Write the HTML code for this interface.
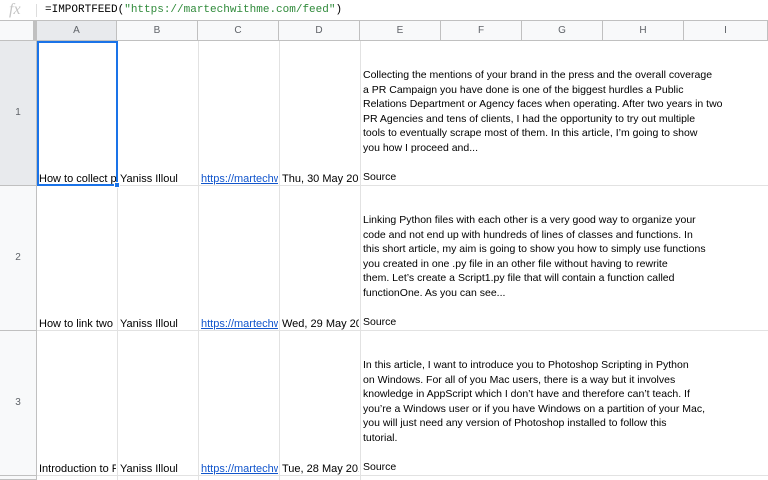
<!DOCTYPE html>
<html><head><style>
*{margin:0;padding:0;box-sizing:border-box}
body{width:768px;height:480px;overflow:hidden;background:#fff;font-family:"Liberation Sans",Arial,sans-serif;font-size:11px;color:#000;position:relative}
.a{position:absolute}
.fb{left:0;top:0;width:768px;height:21px;border-bottom:1px solid #c0c0c0;background:#fff}
.fx{left:9px;top:1px;font-family:"Liberation Serif",serif;font-style:italic;color:#c4c4c4;font-size:16px}
.sep{left:36px;top:4px;width:1px;height:13px;background:#ddd}
.fm{left:45px;top:4px;font-family:"Liberation Mono",monospace;font-size:11px;color:#000}
.fm span{color:#2f8a3a}
.hdr{top:21px;height:20px;background:#f8f9fa;border-right:1px solid #c0c0c0;border-bottom:1px solid #c0c0c0;color:#5f6368;font-size:10px;text-align:center;line-height:19px}
.rh{left:0;width:37px;background:#f8f9fa;border-right:1px solid #c0c0c0;border-bottom:1px solid #c0c0c0;color:#5f6368;font-size:10px;text-align:center}
.vl{top:41px;width:1px;height:439px;background:#e2e2e2}
.hl{left:37px;width:731px;height:1px;background:#e2e2e2}
.c{white-space:nowrap;overflow:hidden;height:14px;line-height:14px}
.lk{color:#1155cc;text-decoration:underline}
.e{left:363px;line-height:14.5px;white-space:pre;font-size:10.5px}
</style></head><body>
<div class="a fb"></div>
<div class="a fx">fx</div>
<div class="a sep"></div>
<div class="a fm">=IMPORTFEED(<span>"https://martechwithme.com/feed"</span>)</div>

<div class="a hdr" style="left:0;width:37px;border-right:4px solid #c0c0c0"></div>
<div class="a hdr" style="left:37px;width:80px;background:#e8eaed">A</div>
<div class="a hdr" style="left:117px;width:81px">B</div>
<div class="a hdr" style="left:198px;width:81px">C</div>
<div class="a hdr" style="left:279px;width:81px">D</div>
<div class="a hdr" style="left:360px;width:81px">E</div>
<div class="a hdr" style="left:441px;width:81px">F</div>
<div class="a hdr" style="left:522px;width:81px">G</div>
<div class="a hdr" style="left:603px;width:81px">H</div>
<div class="a hdr" style="left:684px;width:84px">I</div>

<div class="a rh" style="top:41px;height:145px;line-height:143px;background:#e8eaed">1</div>
<div class="a rh" style="top:186px;height:145px;line-height:143px">2</div>
<div class="a rh" style="top:331px;height:145px;line-height:143px">3</div>
<div class="a rh" style="top:476px;height:4px"></div>

<div class="a vl" style="left:117px"></div>
<div class="a vl" style="left:198px"></div>
<div class="a vl" style="left:279px"></div>
<div class="a vl" style="left:360px"></div>
<div class="a hl" style="top:185px"></div>
<div class="a hl" style="top:330px"></div>
<div class="a hl" style="top:475px"></div>

<div class="a c" style="left:39px;top:172px;width:77px">How to collect press</div>
<div class="a c" style="left:120px;top:172px;width:77px">Yaniss Illoul</div>
<div class="a c lk" style="left:201px;top:172px;width:77px">https://martechwithme</div>
<div class="a c" style="left:282px;top:172px;width:77px">Thu, 30 May 2019</div>
<div class="a e" style="top:68px">Collecting the mentions of your brand in the press and the overall coverage
a PR Campaign you have done is one of the biggest hurdles a Public
Relations Department or Agency faces when operating. After two years in two
PR Agencies and tens of clients, I had the opportunity to try out multiple
tools to eventually scrape most of them. In this article, I’m going to show
you how I proceed and...

Source</div>

<div class="a c" style="left:39px;top:317px;width:77px">How to link two Python</div>
<div class="a c" style="left:120px;top:317px;width:77px">Yaniss Illoul</div>
<div class="a c lk" style="left:201px;top:317px;width:77px">https://martechwithme</div>
<div class="a c" style="left:282px;top:317px;width:77px">Wed, 29 May 2019</div>
<div class="a e" style="top:213px">Linking Python files with each other is a very good way to organize your
code and not end up with hundreds of lines of classes and functions. In
this short article, my aim is going to show you how to simply use functions
you created in one .py file in an other file without having to rewrite
them. Let’s create a Script1.py file that will contain a function called
functionOne. As you can see...

Source</div>

<div class="a c" style="left:39px;top:462px;width:77px">Introduction to Photoshop</div>
<div class="a c" style="left:120px;top:462px;width:77px">Yaniss Illoul</div>
<div class="a c lk" style="left:201px;top:462px;width:77px">https://martechwithme</div>
<div class="a c" style="left:282px;top:462px;width:77px">Tue, 28 May 2019</div>
<div class="a e" style="top:358px">In this article, I want to introduce you to Photoshop Scripting in Python
on Windows. For all of you Mac users, there is a way but it involves
knowledge in AppScript which I don’t have and therefore can’t teach. If
you’re a Windows user or if you have Windows on a partition of your Mac,
you will just need any version of Photoshop installed to follow this
tutorial.

Source</div>

<div class="a" style="left:37px;top:41px;width:81px;height:145px;border:2px solid #1a73e8"></div>
<div class="a" style="left:114px;top:182px;width:6px;height:6px;background:#1a73e8;border:1px solid #fff"></div>
</body></html>
